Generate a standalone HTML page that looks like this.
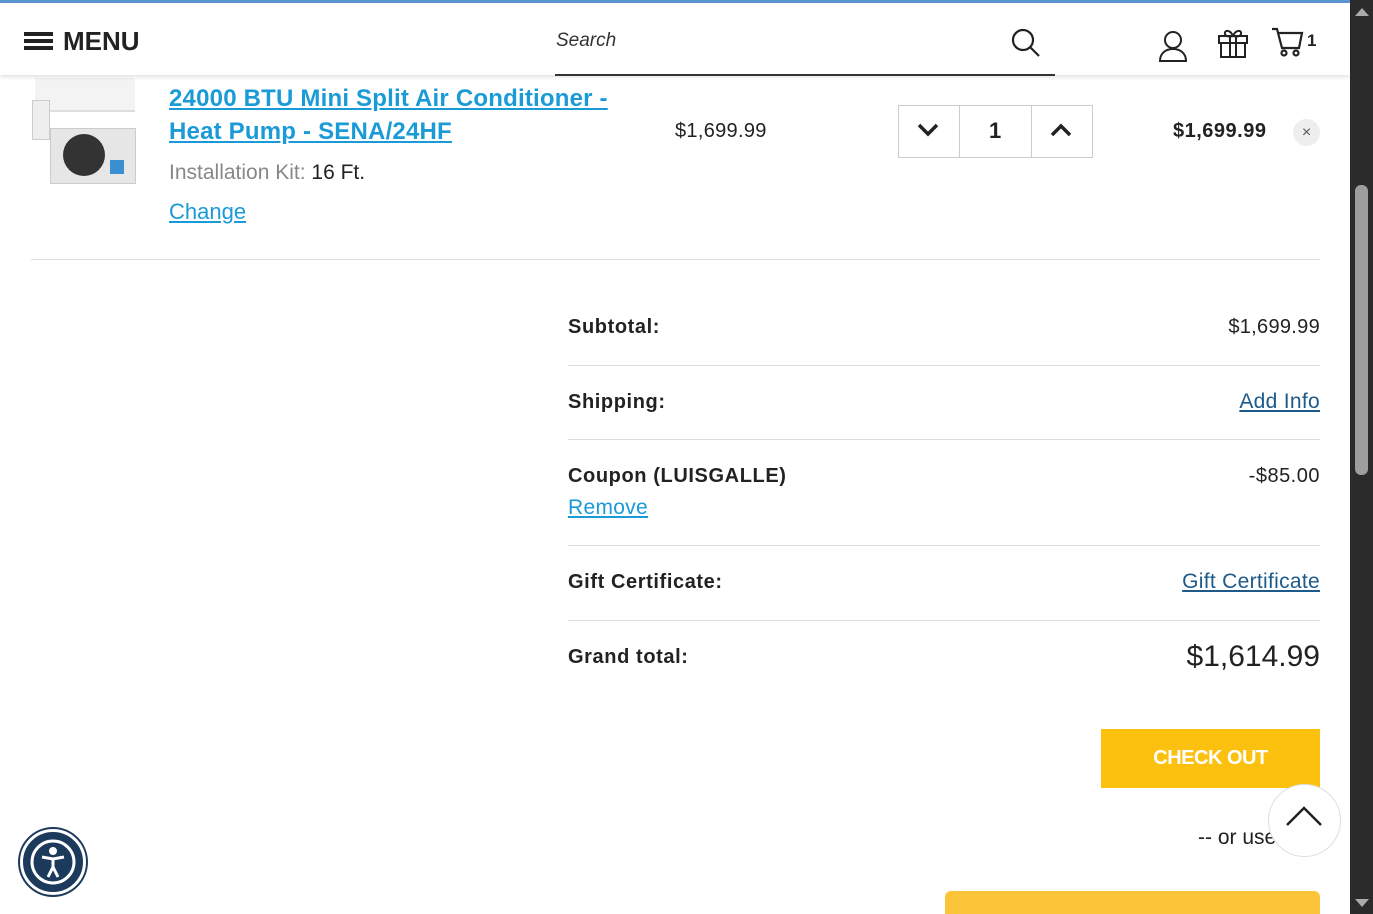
<!DOCTYPE html>
<html><head><meta charset="utf-8"><style>
*{margin:0;padding:0;box-sizing:border-box}
html,body{width:1373px;height:914px;overflow:hidden}
body{background:#fff;font-family:"Liberation Sans",sans-serif;color:#222;position:relative}
.a{position:absolute}
a{color:#1a9bd7}
.lbl{font-weight:bold;font-size:20px;color:#222;letter-spacing:.6px}
.hr{position:absolute;height:1px;background:#ddd}
</style></head><body>
<div class="a" style="left:0;top:0;width:1350px;height:3px;background:#5b95d0"></div>
<div class="a" style="left:0;top:3px;width:1350px;height:72px;background:#fff;box-shadow:0 2px 4px rgba(0,0,0,.12);z-index:2">
  <div class="a" style="left:24px;top:29px;width:29px;height:4px;background:#222;box-shadow:0 7px 0 #222,0 14px 0 #222"></div>
  <div class="a" style="left:63px;top:23px;font-weight:bold;font-size:26px;letter-spacing:0">MENU</div>
  <div class="a" style="left:556px;top:27px;font-style:italic;font-size:19px;color:#333">Search</div>
  <div class="a" style="left:555px;top:71px;width:500px;height:2px;background:#333"></div>
  <svg class="a" style="left:1010px;top:24px" width="32" height="32" viewBox="0 0 32 32" fill="none" stroke="#222" stroke-width="2.2"><circle cx="13" cy="13" r="10"/><path d="M20 20l9 9"/></svg>
  <svg class="a" style="left:1157px;top:26px" width="32" height="34" viewBox="0 0 32 34" fill="none" stroke="#222" stroke-width="2"><circle cx="16" cy="11" r="8"/><path d="M3 32c0-8 6-12 13-12s13 4 13 12z"/></svg>
  <svg class="a" style="left:1217px;top:24px" width="32" height="32" viewBox="0 0 32 32" fill="none" stroke="#222" stroke-width="2"><rect x="2" y="9" width="28" height="7"/><rect x="4" y="16" width="24" height="14"/><path d="M13 9v21M19 9v21M16 9c-3-7-9-6-8-2s8 2 8 2c3-7 9-6 8-2s-8 2-8 2"/></svg>
  <svg class="a" style="left:1271px;top:23px" width="34" height="32" viewBox="0 0 34 32" fill="none" stroke="#222" stroke-width="2.2"><path d="M1 3h5l5 19h17l3-15H8"/><circle cx="13" cy="27" r="2.5"/><circle cx="25" cy="27" r="2.5"/></svg>
  <div class="a" style="left:1307px;top:28px;font-weight:bold;font-size:17px">1</div>
</div>
<div class="a" style="left:35px;top:78px;width:100px;height:34px;background:#f3f3f3;border-bottom:2px solid #ddd"></div>
<div class="a" style="left:32px;top:100px;width:18px;height:40px;background:#eee;border:1px solid #ccc"></div>
<div class="a" style="left:50px;top:128px;width:86px;height:56px;background:#e6e6e6;border:1px solid #ccc"></div>
<div class="a" style="left:63px;top:134px;width:42px;height:42px;border-radius:50%;background:#333"></div>
<div class="a" style="left:110px;top:160px;width:14px;height:14px;background:#3a8fd0"></div>
<div class="a" style="left:169px;top:82px;font-weight:bold;font-size:24px;line-height:33px;letter-spacing:.2px"><a href="#">24000 BTU Mini Split Air Conditioner -<br>Heat Pump - SENA/24HF</a></div>
<div class="a" style="left:169px;top:161px;font-size:21px;color:#888">Installation Kit: <span style="color:#222">16 Ft.</span></div>
<div class="a" style="left:169px;top:199px;font-size:22px"><a href="#">Change</a></div>
<div class="a" style="left:675px;top:120px;font-size:20px;letter-spacing:.3px">$1,699.99</div>
<div class="a" style="left:898px;top:105px;width:195px;height:53px;border:1px solid #ccc"></div>
<div class="a" style="left:959px;top:105px;width:1px;height:53px;background:#ccc"></div>
<div class="a" style="left:1031px;top:105px;width:1px;height:53px;background:#ccc"></div>
<svg class="a" style="left:916px;top:122px" width="24" height="16" viewBox="0 0 24 16" fill="none" stroke="#222" stroke-width="3.5"><path d="M3 3l9 9 9-9"/></svg>
<div class="a" style="left:989px;top:118px;font-weight:bold;font-size:22px">1</div>
<svg class="a" style="left:1049px;top:122px" width="24" height="16" viewBox="0 0 24 16" fill="none" stroke="#222" stroke-width="3.5"><path d="M3 13l9-9 9 9"/></svg>
<div class="a" style="left:1173px;top:120px;font-weight:bold;font-size:20px;letter-spacing:.5px">$1,699.99</div>
<div class="a" style="left:1293px;top:119px;width:27px;height:27px;border-radius:50%;background:#eee;text-align:center;line-height:27px;font-size:16px;color:#555">×</div>
<div class="hr" style="left:31px;top:259px;width:1289px"></div>
<div class="a lbl" style="left:568px;top:316px">Subtotal:</div>
<div class="a" style="right:53px;top:316px;font-size:20px;letter-spacing:.3px">$1,699.99</div>
<div class="hr" style="left:568px;top:365px;width:752px"></div>
<div class="a lbl" style="left:568px;top:391px">Shipping:</div>
<div class="a" style="right:53px;top:390px;font-size:21px;letter-spacing:.3px"><a href="#" style="color:#1d5a8a">Add Info</a></div>
<div class="hr" style="left:568px;top:439px;width:752px"></div>
<div class="a lbl" style="left:568px;top:465px">Coupon (LUISGALLE)</div>
<div class="a" style="left:568px;top:496px;font-size:21px;letter-spacing:.3px"><a href="#">Remove</a></div>
<div class="a" style="right:53px;top:465px;font-size:20px;letter-spacing:.5px">-$85.00</div>
<div class="hr" style="left:568px;top:545px;width:752px"></div>
<div class="a lbl" style="left:568px;top:571px">Gift Certificate:</div>
<div class="a" style="right:53px;top:570px;font-size:21px;letter-spacing:.3px"><a href="#" style="color:#1d5a8a">Gift Certificate</a></div>
<div class="hr" style="left:568px;top:620px;width:752px"></div>
<div class="a lbl" style="left:568px;top:646px">Grand total:</div>
<div class="a" style="right:53px;top:640px;font-size:30px">$1,614.99</div>
<div class="a" style="left:1101px;top:729px;width:219px;height:59px;background:#fcc10f;color:#fff;font-weight:bold;font-size:20px;text-align:center;line-height:59px;letter-spacing:-.5px">CHECK OUT</div>
<div class="a" style="left:1198px;top:826px;font-size:21px">-- or use --</div>
<div class="a" style="left:1268px;top:784px;width:73px;height:73px;border-radius:50%;background:#fff;border:1px solid #ddd"></div>
<svg class="a" style="left:1285px;top:805px" width="38" height="22" viewBox="0 0 38 22" fill="none" stroke="#222" stroke-width="2.5"><path d="M2 20L19 3l17 17"/></svg>
<div class="a" style="left:945px;top:891px;width:375px;height:23px;background:#fcc439;border-radius:6px 6px 0 0"></div>
<div class="a" style="left:20px;top:829px;width:66px;height:66px;border-radius:50%;background:#1b3a5c;border:3px solid #fff;box-shadow:0 0 0 2px #1b3a5c"></div>
<svg class="a" style="left:28px;top:837px" width="50" height="50" viewBox="0 0 50 50" fill="none" stroke="#fff" stroke-width="3"><circle cx="25" cy="25" r="21"/><circle cx="25" cy="14" r="2.5" fill="#fff"/><path d="M14 20l11 2 11-2M25 22v8l-5 10M25 30l5 10"/></svg>
<div class="a" style="left:1350px;top:0;width:23px;height:914px;background:#2b2b2b"></div>
<div class="a" style="left:1355px;top:185px;width:13px;height:290px;background:#9e9e9e;border-radius:6px"></div>
<div class="a" style="left:1355px;top:8px;width:0;height:0;border-left:7px solid transparent;border-right:7px solid transparent;border-bottom:8px solid #aaa"></div>
<div class="a" style="left:1355px;top:899px;width:0;height:0;border-left:7px solid transparent;border-right:7px solid transparent;border-top:8px solid #aaa"></div>
</body></html>
